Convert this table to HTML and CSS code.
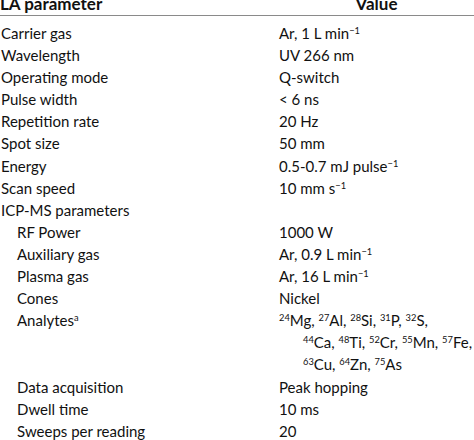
FILE: index.html
```html
<!DOCTYPE html>
<html>
<head>
<meta charset="utf-8">
<link rel="stylesheet" href="styles.css">
</head>
<body>
<div class="tbl">
  <div class="head">
    <div class="h1">LA parameter</div>
    <div class="h2">Value</div>
  </div>
  <div class="body">
    <div class="k">Carrier gas</div><div class="v">Ar, 1 L min<sup>−1</sup></div>
    <div class="k">Wavelength</div><div class="v">UV 266 nm</div>
    <div class="k">Operating mode</div><div class="v">Q-switch</div>
    <div class="k">Pulse width</div><div class="v">&lt; 6 ns</div>
    <div class="k">Repetition rate</div><div class="v">20 Hz</div>
    <div class="k">Spot size</div><div class="v">50 mm</div>
    <div class="k">Energy</div><div class="v">0.5-0.7 mJ pulse<sup>−1</sup></div>
    <div class="k">Scan speed</div><div class="v">10 mm s<sup>−1</sup></div>
    <div class="k">ICP-MS parameters</div><div class="v"></div>
    <div class="k ind">RF Power</div><div class="v">1000 W</div>
    <div class="k ind">Auxiliary gas</div><div class="v">Ar, 0.9 L min<sup>−1</sup></div>
    <div class="k ind">Plasma gas</div><div class="v">Ar, 16 L min<sup>−1</sup></div>
    <div class="k ind">Cones</div><div class="v">Nickel</div>
    <div class="k ind">Analytes<sup>a</sup></div>
    <div class="v multi">
      <div><sup>24</sup>Mg, <sup>27</sup>Al, <sup>28</sup>Si, <sup>31</sup>P, <sup>32</sup>S,</div>
      <div class="cont"><sup>44</sup>Ca, <sup>48</sup>Ti, <sup>52</sup>Cr, <sup>55</sup>Mn, <sup>57</sup>Fe,</div>
      <div class="cont"><sup>63</sup>Cu, <sup>64</sup>Zn, <sup>75</sup>As</div>
    </div>
    <div class="k ind">Data acquisition</div><div class="v">Peak hopping</div>
    <div class="k ind">Dwell time</div><div class="v">10 ms</div>
    <div class="k ind">Sweeps per reading</div><div class="v">20</div>
  </div>
</div>
</body>
</html>
```
FILE: styles.css
```css
html, body {
  margin: 0;
  padding: 0;
  background: #fff;
}
body {
  font-family: "Lato", "Liberation Sans", sans-serif;
  font-size: 15px;
  color: #111;
  overflow: hidden;
}
.tbl {
  width: 474px;
  margin-top: -7px;
}
.head {
  display: grid;
  grid-template-columns: 279px 1fr;
  line-height: 22px;
  font-size: 17px;
  font-weight: 700;
  border-bottom: 1px solid #8a8a8a;
}
.h2 {
  text-align: center;
}
.body {
  display: grid;
  grid-template-columns: 279px 1fr;
  line-height: 22.1px;
  padding-top: 6px;
}
.k {
  padding-left: 1px;
  white-space: nowrap;
}
.k.ind {
  padding-left: 17px;
}
.v {
  white-space: nowrap;
}
.cont {
  padding-left: 24px;
}
sup {
  font-size: 0.62em;
  line-height: 0;
  vertical-align: 0.5em;
}
```
